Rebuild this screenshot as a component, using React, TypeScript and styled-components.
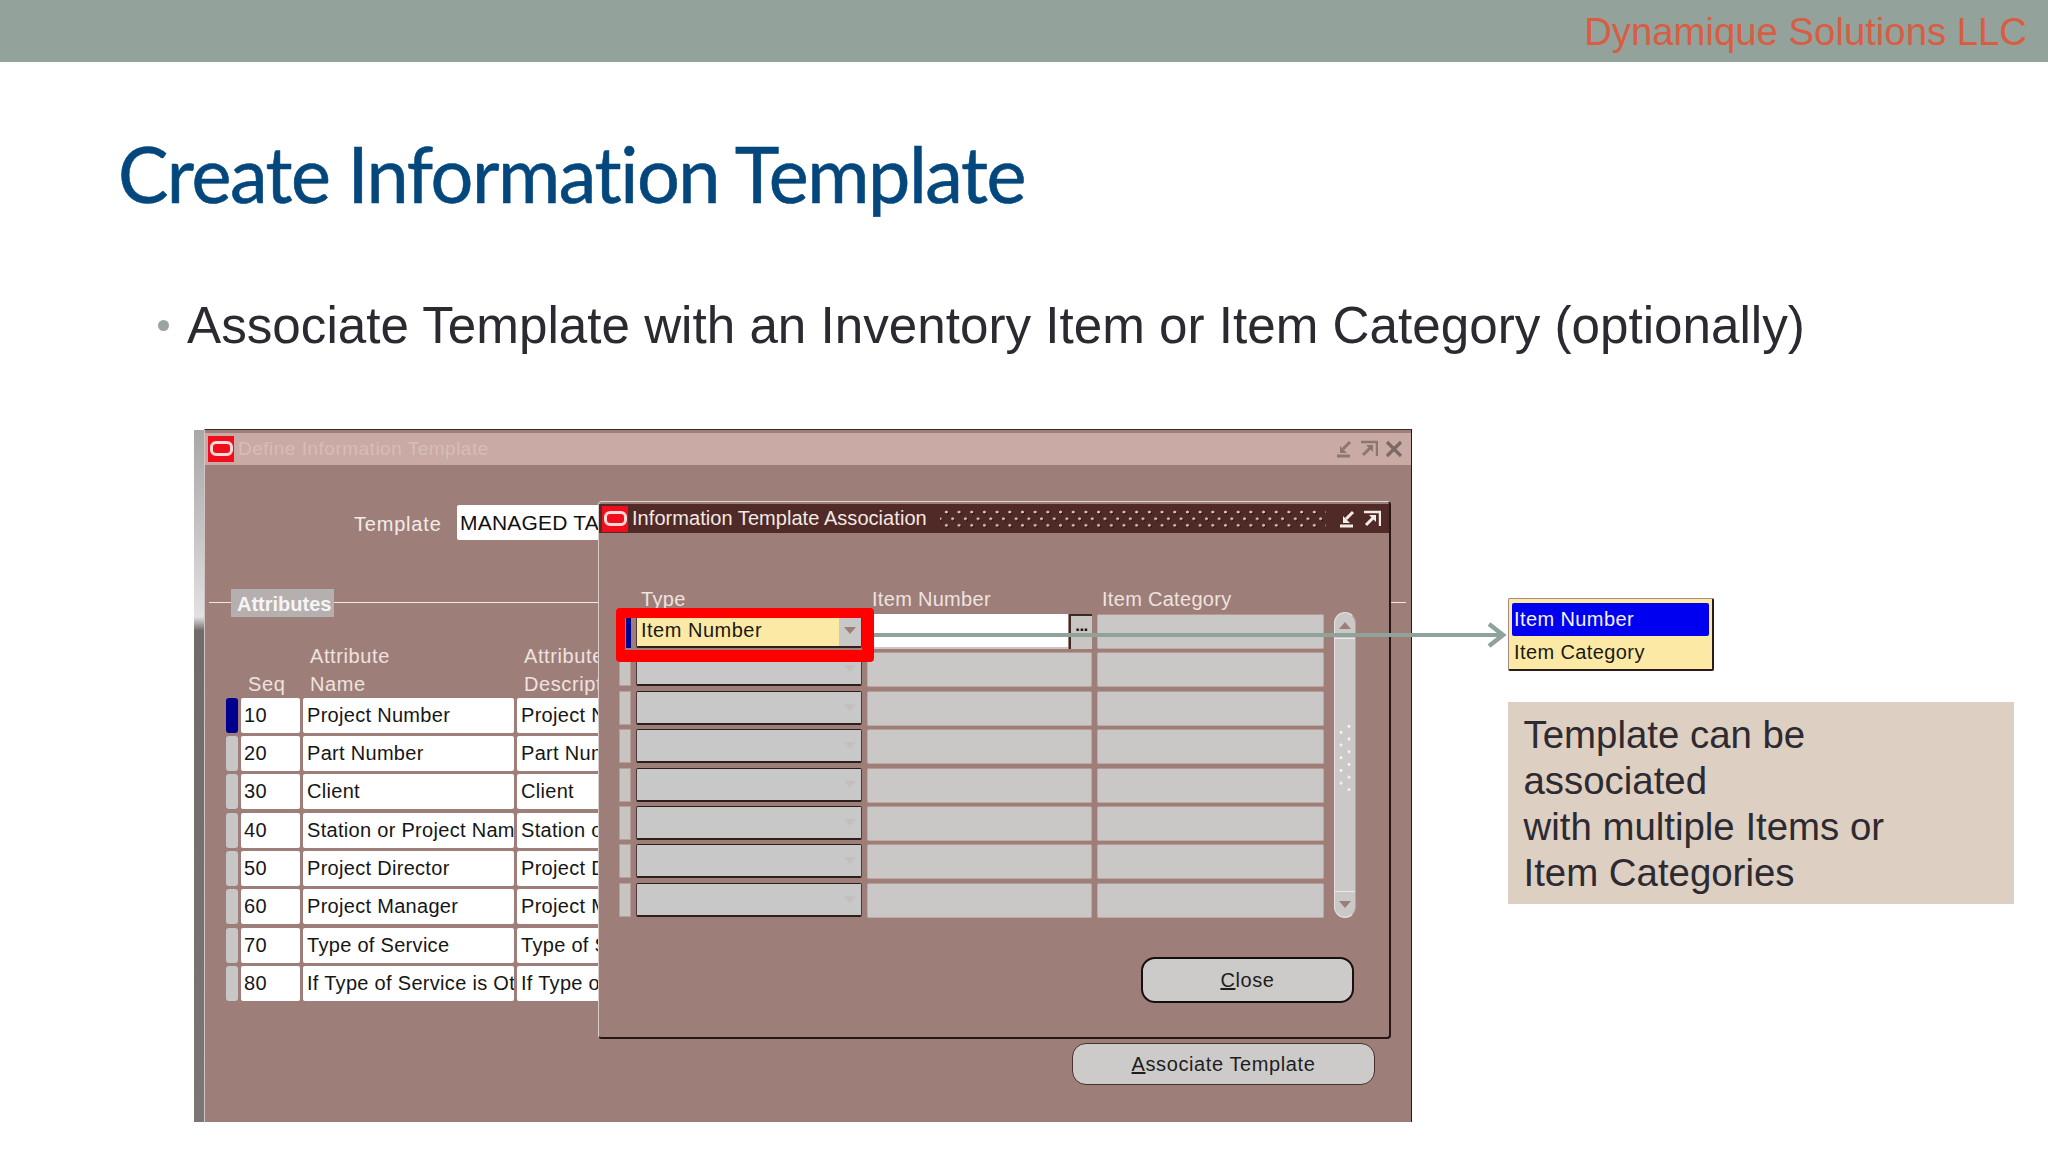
import styled, { createGlobalStyle } from 'styled-components';

const GlobalStyle = createGlobalStyle`
  html, body {
    margin: 0;
    padding: 0;
    background: #ffffff;
  }
  body {
    width: 2048px;
    height: 1152px;
    overflow: hidden;
    font-family: 'Liberation Sans', Arial, sans-serif;
  }
`;

const Slide = styled.div`
  width: 2048px;
  height: 1152px;
  display: flex;
  flex-direction: column;
`;

const Header = styled.header`
  height: 61.5px;
  flex: none;
  display: flex;
  align-items: center;
  justify-content: flex-end;
  padding-right: 21px;
  background: #93a39b;
`;

const Company = styled.span`
  font-size: 38.3px;
  margin-top: 2px;
  color: #d95c43;
`;

const Title = styled.h1`
  margin: 66.5px 0 0 118px;
  height: 90px;
  font-family: Lato, sans-serif;
  font-size: 78px;
  line-height: 90px;
  font-weight: 400;
  color: #04477c;
  white-space: nowrap;
  transform-origin: left center;
  transform: scaleX(0.97);
  letter-spacing: -1.5px;
  -webkit-text-stroke: 0.6px #04477c;
`;

const BulletRow = styled.div`
  display: flex;
  align-items: center;
  margin: 75px 0 0 158px;
  height: 64px;
`;

const BulletDot = styled.span`
  width: 11px;
  height: 11px;
  border-radius: 50%;
  background: #9aa5a0;
  margin-right: 18px;
`;

const BulletText = styled.span`
  font-size: 51.2px;
  color: #2b2a30;
  white-space: nowrap;
`;

const Stage = styled.div`
  position: relative;
  display: flex;
  align-items: flex-start;
  margin-top: 72px;
  padding-left: 194px;
`;

const MainWindow = styled.section`
  position: relative;
  width: 1218px;
  height: 693px;
  display: flex;
  flex: none;
  overflow: hidden;
`;

const WindowStrip = styled.div`
  width: 10px;
  flex: none;
  margin-top: 1px;
  background: linear-gradient(180deg, #a9a7a7 0%, #c6c4c4 15%, #e2e0e0 27%, #6f6b6b 29%, #7b7676 100%);
`;

const WindowFrame = styled.div`
  flex: 1;
  display: flex;
  flex-direction: column;
  background: #9e7e78;
  border-top: 1.5px solid #3a2a28;
  border-right: 1.5px solid #241a18;
  border-left: 1px solid #d0c6c4;
`;

const TitleBar = styled.div<{ $active?: boolean }>`
  display: flex;
  align-items: center;
  flex: none;
  background: ${({ $active }) => ($active ? '#502a27' : '#c9aaa5')};
  height: ${({ $active }) => ($active ? '29px' : '32px')};
  margin-top: ${({ $active }) => ($active ? '2px' : '2.5px')};
  padding: 0 8px 0 3px;
`;

const OracleBadge = styled.div`
  width: 26px;
  height: 26px;
  flex: none;
  background: #f00e1c;
  display: flex;
  align-items: center;
  justify-content: center;
  &::before {
    content: '';
    width: 17px;
    height: 9px;
    border: 3px solid #fbd9d9;
    border-radius: 6px;
  }
`;

const TitleText = styled.span<{ $active?: boolean }>`
  margin-left: 4px;
  font-size: ${({ $active }) => ($active ? '20px' : '19px')};
  letter-spacing: ${({ $active }) => ($active ? '0.05px' : '0.5px')};
  color: ${({ $active }) => ($active ? '#f3e8e4' : '#d7bdb8')};
  white-space: nowrap;
`;

const Dither = styled.div`
  flex: 1;
  height: 20px;
  margin: 0 12px 0 13px;
  background-image:
    radial-gradient(circle at center, #dcc0ba 1.2px, transparent 1.6px),
    radial-gradient(circle at center, #dcc0ba 1.2px, transparent 1.6px),
    radial-gradient(circle at center, #2c1412 1.3px, transparent 1.7px),
    radial-gradient(circle at center, #2c1412 1.3px, transparent 1.7px);
  background-size: 12.7px 13.3px;
  background-position: 0 -3.6px, 6.35px 3.05px, 1px -2.6px, 7.35px 4.05px;
`;

const WindowButtons = styled.div`
  display: flex;
  align-items: center;
  gap: 7px;
  margin-left: auto;
`;

const MainBody = styled.div`
  display: flex;
  flex-direction: column;
  flex: 1;
`;

const TemplateRow = styled.div`
  display: flex;
  align-items: center;
  height: 35px;
  margin: 40px 0 0 149px;
`;

const FieldLabel = styled.span`
  width: 103px;
  font-size: 20px;
  letter-spacing: 0.8px;
  color: #f4ecea;
  margin-top: 5px;
`;

const TemplateInput = styled.div`
  width: 330px;
  height: 35px;
  display: flex;
  align-items: center;
  padding: 1px 0 0 3px;
  box-sizing: border-box;
  background: #ffffff;
  border-radius: 2px;
  font-size: 21px;
  letter-spacing: 0.2px;
  color: #111;
  white-space: nowrap;
`;

const SectionRule = styled.div`
  position: relative;
  height: 28px;
  margin: 49px 5px 0 4px;
  &::before {
    content: '';
    position: absolute;
    left: 0;
    right: 0;
    top: 13px;
    height: 1.5px;
    background: #efe8e6;
  }
`;

const SectionLabel = styled.span`
  position: relative;
  display: inline-block;
  height: 28px;
  line-height: 30px;
  margin-left: 22px;
  padding: 0 0 0 6px;
  width: 97px;
  background: #b5b0af;
  color: #f6f4f4;
  font-size: 20px;
  font-weight: 700;
  white-space: nowrap;
`;

const AttrGrid = styled.div`
  display: grid;
  grid-template-columns: 12px 59px 211px 300px;
  column-gap: 3px;
  margin-left: 21px;
`;

const HeaderGrid = styled(AttrGrid)`
  margin-top: 24px;
  height: 57px;
  align-items: end;
`;

const ColumnHead = styled.div<{ $inset: number }>`
  font-size: 20px;
  line-height: 28px;
  letter-spacing: 0.6px;
  color: #eee3e0;
  padding-left: ${({ $inset }) => $inset}px;
  white-space: nowrap;
`;

const AssocHead = styled(ColumnHead)`
  letter-spacing: 0.3px;
`;

const Rows = styled.div`
  display: flex;
  flex-direction: column;
  gap: 3.4px;
`;

const RowMarker = styled.div<{ $current?: boolean }>`
  height: 35px;
  border-radius: 3px;
  background: ${({ $current }) => ($current ? '#00008e' : '#c8c7c6')};
`;

const TextCell = styled.div<{ $inset: number }>`
  height: 35px;
  display: flex;
  align-items: center;
  box-sizing: border-box;
  padding-left: ${({ $inset }) => $inset}px;
  background: #ffffff;
  border-radius: 2px;
  font-size: 20px;
  letter-spacing: 0.3px;
  color: #161616;
  white-space: nowrap;
  overflow: hidden;
`;

const BottomBar = styled.div`
  display: flex;
  justify-content: flex-end;
  margin: 42px 36px 0 0;
`;

const FormButton = styled.div<{ $wide?: boolean }>`
  width: ${({ $wide }) => ($wide ? '303px' : '213px')};
  height: ${({ $wide }) => ($wide ? '42px' : '46px')};
  box-sizing: border-box;
  display: flex;
  align-items: center;
  justify-content: center;
  background: #cdcbca;
  border: ${({ $wide }) => ($wide ? '1.5px solid #4a2f2c' : '2px solid #17100f')};
  border-radius: 14px;
  font-size: 20px;
  letter-spacing: 0.6px;
  color: #1d1d1d;
`;

const InnerWindow = styled.section`
  position: absolute;
  left: 404px;
  top: 72px;
  width: 793px;
  height: 538px;
  box-sizing: border-box;
  display: flex;
  flex-direction: column;
  background: #9e7e78;
  border-top: 1.5px solid #e0d8d5;
  border-left: 1.5px solid #d8cfcc;
  border-right: 2px solid #231614;
  border-bottom: 2px solid #231614;
  border-radius: 4px;
`;

const AssocArea = styled.div`
  display: flex;
  align-items: flex-start;
  padding-left: 20px;
  margin-top: 81px;
`;

const AssocGrid = styled.div`
  display: grid;
  grid-template-columns: 12px 226px 225px 227px;
  column-gap: 5px;
  row-gap: 3.4px;
  grid-auto-rows: 35px;
`;

const AssocHeads = styled.div`
  grid-column: 1 / -1;
  display: grid;
  grid-template-columns: 12px 226px 225px 227px;
  column-gap: 5px;
  position: absolute;
  margin-top: -29px;
`;

const AssocMarker = styled.div`
  height: 34px;
  background: #c8c4c2;
  border: 1px solid #b99f9a;
  box-sizing: border-box;
`;

const CurrentMarker = styled.div`
  height: 32px;
  margin: 2px 0 0 7px;
  width: 5px;
  background: #000090;
`;

const Combo = styled.div<{ $current?: boolean }>`
  height: 34px;
  box-sizing: border-box;
  display: flex;
  align-items: stretch;
  background: ${({ $current }) => ($current ? '#fde9a6' : '#c9c8c8')};
  border-top: ${({ $current }) => ($current ? 'none' : '1.5px solid #2e1f1d')};
  border-left: 1.5px solid #4d3936;
  border-right: 1.5px solid #4d3936;
  border-bottom: 2px solid #2e1f1d;
  border-radius: 2px;
  font-size: 20px;
  letter-spacing: 0.5px;
  color: #1a1a10;
`;

const ComboValue = styled.span`
  flex: 1;
  display: flex;
  align-items: center;
  padding-left: 4px;
`;

const ComboArrow = styled.span<{ $current?: boolean }>`
  width: 22px;
  display: flex;
  align-items: center;
  justify-content: center;
  background: #c9c8c8;
  &::before {
    content: '';
    border-left: 6px solid transparent;
    border-right: 6px solid transparent;
    border-top: 7px solid ${({ $current }) => ($current ? '#9e7e78' : '#c4bfbe')};
  }
`;

const GrayField = styled.div`
  height: 35px;
  box-sizing: border-box;
  background: #c9c8c7;
  border: 1.5px solid #c2a7a2;
  border-top-color: #b89a95;
  border-radius: 2px;
`;

const LovField = styled.div`
  height: 35px;
  display: flex;
`;

const WhiteInput = styled.div`
  flex: 1;
  background: #ffffff;
  border-bottom: 2px solid #cfc5c2;
`;

const LovButton = styled.div`
  width: 23px;
  margin-left: 1px;
  box-sizing: border-box;
  display: flex;
  align-items: center;
  justify-content: center;
  padding-bottom: 14px;
  background: #c9c5c3;
  border-top: 2px solid #3d2926;
  border-left: 2px solid #3d2926;
  font-size: 17px;
  font-weight: 700;
  letter-spacing: -0.5px;
  line-height: 1;
  color: #111;
`;

const Scrollbar = styled.div`
  width: 22px;
  height: 306px;
  margin: -2px 0 0 10px;
  box-sizing: border-box;
  display: flex;
  flex-direction: column;
  align-items: center;
  justify-content: space-between;
  background: #cbc9c8;
  border: 1.5px solid #e8e0de;
  border-right-color: #b89f9a;
  border-radius: 11px;
`;

const ScrollCap = styled.span<{ $down?: boolean }>`
  width: 100%;
  height: 25px;
  display: flex;
  align-items: center;
  justify-content: center;
  border-top: ${({ $down }) => ($down ? '1.5px solid #efe9e7' : 'none')};
  border-bottom: ${({ $down }) => ($down ? 'none' : '1.5px solid #efe9e7')};
  &::before {
    content: '';
    border-left: 6px solid transparent;
    border-right: 6px solid transparent;
    border-${({ $down }) => ($down ? 'top' : 'bottom')}: 7px solid #9e7e78;
  }
`;

const ScrollGrip = styled.span`
  width: 14px;
  height: 68px;
  margin-bottom: 16px;
  background-image:
    radial-gradient(circle, #f4f2f1 1.3px, transparent 1.8px),
    radial-gradient(circle, #f4f2f1 1.3px, transparent 1.8px);
  background-size: 16px 12.7px;
  background-position: -5px 3px, 3px -3px;
`;

const CloseBar = styled.div`
  display: flex;
  justify-content: flex-end;
  margin: 39px 35px 0 0;
`;

const RedHighlight = styled.div`
  position: absolute;
  left: 17px;
  top: 105.5px;
  width: 258px;
  height: 54px;
  box-sizing: border-box;
  border: solid #fe0000;
  border-width: 10px 12px 12px 9px;
  border-radius: 4px;
`;

const SideColumn = styled.aside`
  display: flex;
  flex-direction: column;
  align-items: flex-start;
  gap: 31px;
  margin: 169px 0 0 96px;
`;

const Dropdown = styled.div`
  width: 206px;
  height: 73px;
  box-sizing: border-box;
  padding: 4px 3px 0 3px;
  background: #fde9a6;
  border: 1.5px solid #a58a85;
  border-right: 2px solid #2a1c1a;
  border-bottom: 2px solid #2a1c1a;
  border-radius: 2px;
`;

const DropdownItem = styled.div<{ $selected?: boolean }>`
  height: 33px;
  display: flex;
  align-items: center;
  padding-left: 2px;
  background: ${({ $selected }) => ($selected ? '#0000f0' : 'transparent')};
  color: ${({ $selected }) => ($selected ? '#f2f2ff' : '#1a1a10')};
  font-size: 20px;
  letter-spacing: 0.4px;
  border-radius: 2px;
`;

const NoteBox = styled.div`
  width: 506px;
  height: 202px;
  box-sizing: border-box;
  padding: 10px 15.5px;
  background: #ddcfc1;
  font-size: 38.4px;
  line-height: 46px;
  color: #2d2a32;
`;

const Pointer = styled.svg`
  position: absolute;
  left: 874px;
  top: 190px;
`;

const MinimizeIcon = ({ color }: { color: string }) => (
  <svg width="18" height="18" viewBox="0 0 18 18">
    <path d="M2 16h13" stroke={color} strokeWidth="3" fill="none" />
    <path d="M15 2 8 9" stroke={color} strokeWidth="3" fill="none" />
    <path d="M5 6v7h7z" fill={color} />
  </svg>
);

const MaximizeIcon = ({ color }: { color: string }) => (
  <svg width="18" height="18" viewBox="0 0 18 18">
    <path d="M1 2h16v14" stroke={color} strokeWidth="2.4" fill="none" />
    <path d="M3 15 10 8" stroke={color} strokeWidth="3" fill="none" />
    <path d="M6 5h7v7z" fill={color} />
  </svg>
);

const CloseIcon = ({ color }: { color: string }) => (
  <svg width="18" height="18" viewBox="0 0 18 18">
    <path d="M2 2 16 16M16 2 2 16" stroke={color} strokeWidth="3.2" fill="none" />
  </svg>
);

const attributes = [
  ['10', 'Project Number', 'Project Number'],
  ['20', 'Part Number', 'Part Number'],
  ['30', 'Client', 'Client'],
  ['40', 'Station or Project Name', 'Station or Project Name'],
  ['50', 'Project Director', 'Project Director'],
  ['60', 'Project Manager', 'Project Manager'],
  ['70', 'Type of Service', 'Type of Service'],
  ['80', 'If Type of Service is Other', 'If Type of Service is Other'],
];

const emptyRows = [1, 2, 3, 4, 5, 6, 7];

const EmptyAssocRow = (): JSX.Element => (
  <>
    <AssocMarker />
    <Combo>
      <ComboValue />
      <ComboArrow />
    </Combo>
    <GrayField />
    <GrayField />
  </>
);

const App = (): JSX.Element => (
  <Slide>
    <GlobalStyle />
    <Header>
      <Company>Dynamique Solutions LLC</Company>
    </Header>
    <Title>Create Information Template</Title>
    <BulletRow>
      <BulletDot />
      <BulletText>Associate Template with an Inventory Item or Item Category (optionally)</BulletText>
    </BulletRow>
    <Stage>
      <MainWindow>
        <WindowStrip />
        <WindowFrame>
          <TitleBar>
            <OracleBadge />
            <TitleText>Define Information Template</TitleText>
            <WindowButtons>
              <MinimizeIcon color="#8d7672" />
              <MaximizeIcon color="#8d7672" />
              <CloseIcon color="#7b6965" />
            </WindowButtons>
          </TitleBar>
          <MainBody>
            <TemplateRow>
              <FieldLabel>Template</FieldLabel>
              <TemplateInput>MANAGED TASK</TemplateInput>
            </TemplateRow>
            <SectionRule>
              <SectionLabel>Attributes</SectionLabel>
            </SectionRule>
            <HeaderGrid>
              <span />
              <ColumnHead $inset={7}>Seq</ColumnHead>
              <ColumnHead $inset={7}>
                Attribute
                <br />
                Name
              </ColumnHead>
              <ColumnHead $inset={7}>
                Attribute
                <br />
                Description
              </ColumnHead>
            </HeaderGrid>
            <Rows>
              {attributes.map(([seq, name, description], index) => (
                <AttrGrid key={seq}>
                  <RowMarker $current={index === 0} />
                  <TextCell $inset={3}>{seq}</TextCell>
                  <TextCell $inset={4}>{name}</TextCell>
                  <TextCell $inset={4}>{description}</TextCell>
                </AttrGrid>
              ))}
            </Rows>
            <BottomBar>
              <FormButton $wide>
                <span>
                  <u>A</u>ssociate Template
                </span>
              </FormButton>
            </BottomBar>
          </MainBody>
        </WindowFrame>
        <InnerWindow>
          <TitleBar $active>
            <OracleBadge />
            <TitleText $active>Information Template Association</TitleText>
            <Dither />
            <WindowButtons>
              <MinimizeIcon color="#f2ece8" />
              <MaximizeIcon color="#f2ece8" />
            </WindowButtons>
          </TitleBar>
          <AssocArea>
            <AssocGrid>
              <AssocHeads>
                <span />
                <AssocHead $inset={5}>Type</AssocHead>
                <AssocHead $inset={5}>Item Number</AssocHead>
                <AssocHead $inset={5}>Item Category</AssocHead>
              </AssocHeads>
              <CurrentMarker />
              <Combo $current>
                <ComboValue>Item Number</ComboValue>
                <ComboArrow $current />
              </Combo>
              <LovField>
                <WhiteInput />
                <LovButton>...</LovButton>
              </LovField>
              <GrayField />
              {emptyRows.map((row) => (
                <EmptyAssocRow key={row} />
              ))}
            </AssocGrid>
            <Scrollbar>
              <ScrollCap />
              <ScrollGrip />
              <ScrollCap $down />
            </Scrollbar>
          </AssocArea>
          <CloseBar>
            <FormButton>
              <span>
                <u>C</u>lose
              </span>
            </FormButton>
          </CloseBar>
          <RedHighlight />
        </InnerWindow>
      </MainWindow>
      <SideColumn>
        <Dropdown>
          <DropdownItem $selected>Item Number</DropdownItem>
          <DropdownItem>Item Category</DropdownItem>
        </Dropdown>
        <NoteBox>
          Template can be
          <br />
          associated
          <br />
          with multiple Items or
          <br />
          Item Categories
        </NoteBox>
      </SideColumn>
      <Pointer width="640" height="32" viewBox="0 0 640 32">
        <path d="M0 16H628" stroke="#8fa39b" strokeWidth="4" fill="none" />
        <path d="M615 5 629 16 615 27" stroke="#8fa39b" strokeWidth="4.5" fill="none" />
      </Pointer>
    </Stage>
  </Slide>
);

export default App;
